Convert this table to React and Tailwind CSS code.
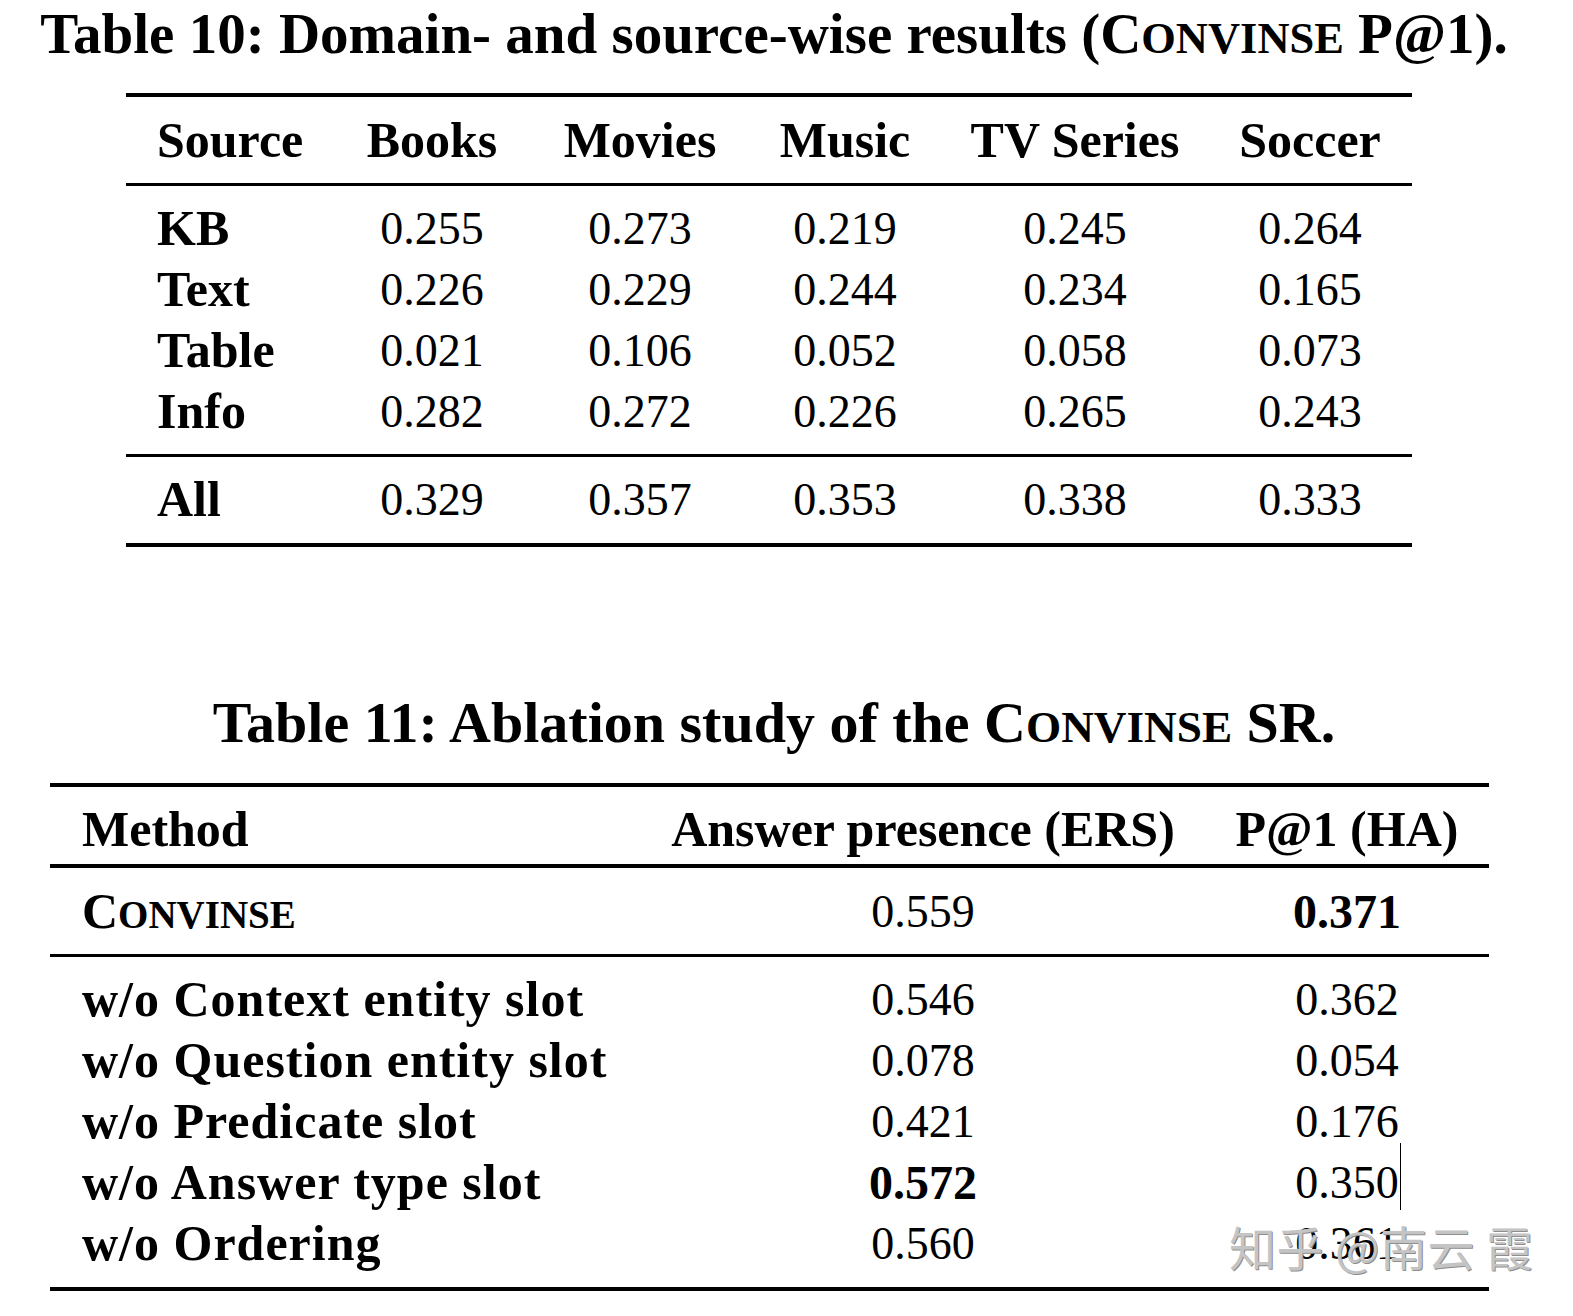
import React from "react";

const t10 = [
  ["KB", "0.255", "0.273", "0.219", "0.245", "0.264"],
  ["Text", "0.226", "0.229", "0.244", "0.234", "0.165"],
  ["Table", "0.021", "0.106", "0.052", "0.058", "0.073"],
  ["Info", "0.282", "0.272", "0.226", "0.265", "0.243"],
];

const t11 = [
  ["w/o Context entity slot", "0.546", "0.362", false],
  ["w/o Question entity slot", "0.078", "0.054", false],
  ["w/o Predicate slot", "0.421", "0.176", false],
  ["w/o Answer type slot", "0.572", "0.350", true],
  ["w/o Ordering", "0.560", "0.361", false],
];

const cols10 = "grid grid-cols-[206px_200px_216px_194px_266px_204px]";
const cols11 = "grid grid-cols-[591px_564px_284px]";

function Convinse() {
  return (
    <span className="whitespace-nowrap">
      C<span className="text-[0.78em] leading-none">ONVINSE</span>
    </span>
  );
}

function Row10({ cells }) {
  return (
    <div className={cols10 + " h-[61px] leading-[61px]"}>
      <div className="pl-[31px] text-[50px] font-bold whitespace-nowrap">{cells[0]}</div>
      {cells.slice(1).map((v, i) => (
        <div key={i} className="text-center text-[46px] whitespace-nowrap">{v}</div>
      ))}
    </div>
  );
}

export default function App() {
  return (
    <div className="relative w-[1573px] h-[1316px] bg-white overflow-hidden text-black font-['Liberation_Serif',serif]">
      {/* Table 10 */}
      <div className="w-[1548px] h-[67px] pt-[1px] text-center text-[57px] leading-[66px] font-bold whitespace-nowrap">
        Table 10: Domain- and source-wise results (<Convinse /> P@1).
      </div>
      <div className="ml-[126px] mt-[26px] w-[1286px]">
        <div className="h-[4px] bg-black" />
        <div className={cols10 + " h-[86px] leading-[86px] text-[50px] font-bold"}>
          <div className="pl-[31px]">Source</div>
          <div className="text-center">Books</div>
          <div className="text-center">Movies</div>
          <div className="text-center">Music</div>
          <div className="text-center whitespace-nowrap">TV Series</div>
          <div className="text-center">Soccer</div>
        </div>
        <div className="h-[3px] bg-black" />
        <div className="pt-[12px] pb-[12px]">
          {t10.map((r) => (
            <Row10 key={r[0]} cells={r} />
          ))}
        </div>
        <div className="h-[3px] bg-black" />
        <div className="pt-[12px] pb-[13px]">
          <Row10 cells={["All", "0.329", "0.357", "0.353", "0.338", "0.333"]} />
        </div>
        <div className="h-[4px] bg-black" />
      </div>

      {/* Table 11 */}
      <div className="mt-[143px] w-[1548px] h-[66px] text-center text-[58px] leading-[66px] font-bold whitespace-nowrap">
        Table 11: Ablation study of the <Convinse /> SR.
      </div>
      <div className="ml-[50px] mt-[27px] w-[1439px]">
        <div className="h-[4px] bg-black" />
        <div className={cols11 + " pt-[12px] pb-[4px] h-[77px] leading-[61px] text-[50px] font-bold whitespace-nowrap"}>
          <div className="pl-[32px]">Method</div>
          <div className="text-center">Answer presence (ERS)</div>
          <div className="text-center">P@1 (HA)</div>
        </div>
        <div className="h-[4px] bg-black" />
        <div className={cols11 + " h-[86px] pt-[13px] pb-[12px] leading-[61px] whitespace-nowrap"}>
          <div className="pl-[32px] text-[50px] font-bold">
            <Convinse />
          </div>
          <div className="text-center text-[46px]">0.559</div>
          <div className="text-center text-[48px] font-bold">0.371</div>
        </div>
        <div className="h-[3px] bg-black" />
        <div className="pt-[12px] pb-[13px]">
          {t11.map(([label, a, b, bold]) => (
            <div key={label} className={cols11 + " h-[61px] leading-[61px] whitespace-nowrap"}>
              <div className="pl-[32px] text-[50px] font-bold tracking-[1px]">{label}</div>
              <div className={bold ? "text-center text-[48px] font-bold" : "text-center text-[46px]"}>{a}</div>
              <div className="text-center text-[46px]">{b}</div>
            </div>
          ))}
        </div>
        <div className="h-[4px] bg-black" />
      </div>

      {/* cursor line artifact */}
      <div className="absolute left-[1400px] top-[1143px] w-[1px] h-[67px] bg-black" />

      {/* watermark */}
      <div className="absolute left-[1229px] top-[1218px] text-[47px] leading-[56px] tracking-[0.5px] whitespace-nowrap text-[#c4c4c4] [text-shadow:1px_1px_0_#8e8e8e] font-['Noto_Sans_CJK_SC',sans-serif]">
        知乎 @南云 霞
      </div>
    </div>
  );
}
